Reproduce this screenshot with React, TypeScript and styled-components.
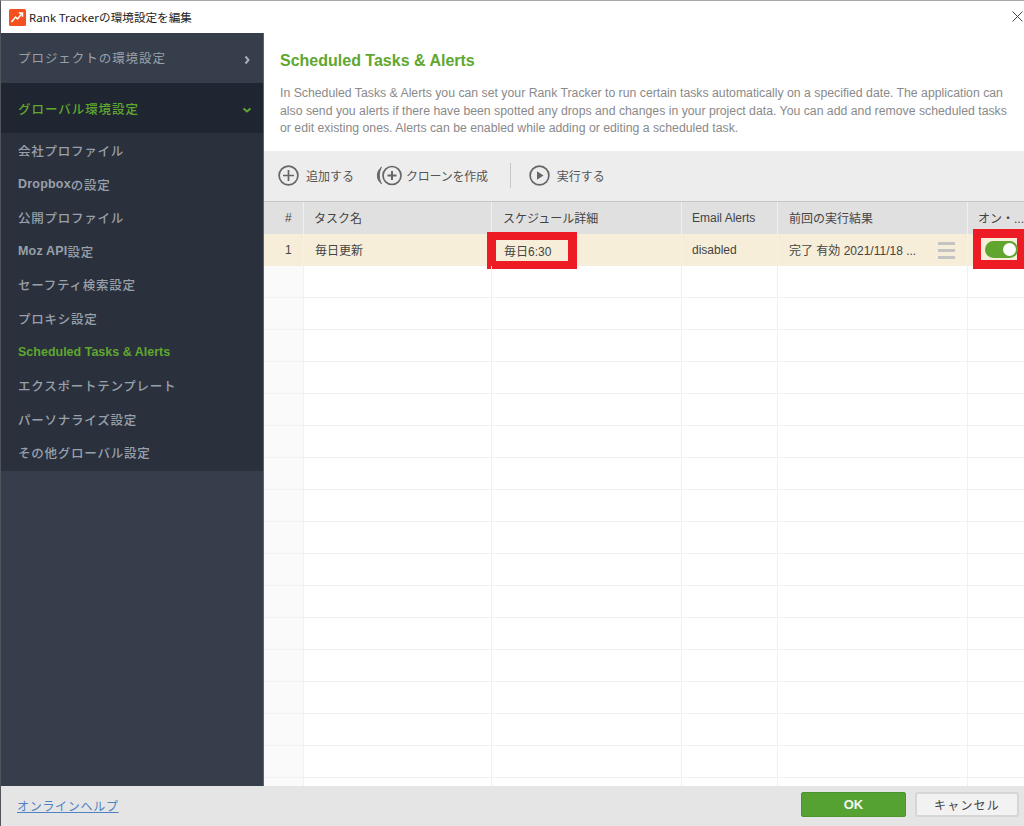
import React from "react";
import styled, { createGlobalStyle } from "styled-components";

const Global = createGlobalStyle`
  html, body { margin: 0; padding: 0; background: #fff; }
  body { font-family: "Liberation Sans", "Noto Sans CJK JP", sans-serif; }
`;

const Win = styled.div`
  width: 1024px; height: 826px; display: flex; flex-direction: column; overflow: hidden;
  box-sizing: border-box; border-top: 1px solid #a8a8a8; border-left: 1px solid #50555c; background: #fff;
  font-family: "Liberation Sans", "Noto Sans CJK JP", sans-serif;
`;
const TitleBar = styled.div`
  height: 32px; flex: none; display: flex; align-items: center; padding-left: 8px; gap: 3px; background: #fff; position: relative;
  font-size: 11.6px; color: #222; font-family: "Noto Sans", "Noto Sans CJK JP", sans-serif;
`;
const CloseBtn = styled.svg`
  position: absolute; right: 1px; top: 10px;
`;
const Body = styled.div`
  flex: 1; display: flex; min-height: 0;
`;
const Side = styled.aside`
  width: 262px; flex: none; background: #373e4b; border-right: 1px solid #5e636a; display: flex; flex-direction: column;
`;
const Head = styled.div<{ $active?: boolean }>`
  height: 50px; flex: none; display: flex; align-items: center; justify-content: space-between; box-sizing: border-box;
  padding: 0 11px ${p => (p.$active ? 0 : 2)}px 17px;
  font-size: 12.5px; letter-spacing: 0.95px; font-weight: ${p => (p.$active ? 500 : 400)};
  color: ${p => (p.$active ? "#5fa72f" : "#98a0ab")};
  background: ${p => (p.$active ? "#1f2632" : "#373e4b")};
  & > svg { margin-top: ${p => (p.$active ? 3 : 5)}px; }
`;
const SubList = styled.div`
  background: #2a303c; padding: 1px 0 2px; display: flex; flex-direction: column;
`;
const SubItem = styled.div<{ $active?: boolean }>`
  height: 33.55px; display: flex; align-items: center; padding-left: 17px;
  font-size: 12.5px; letter-spacing: ${p => (p.$active ? 0 : 0.75)}px;
  font-weight: ${p => (p.$active ? 700 : 500)};
  color: ${p => (p.$active ? "#5fa72f" : "#98a0ab")};
`;
const Latin = styled.b`
  font-weight: 700; letter-spacing: 0.2px;
`;
const Main = styled.main`
  flex: 1; display: flex; flex-direction: column; min-width: 0; background: #fff;
`;
const Intro = styled.div`
  height: 118px; flex: none; box-sizing: border-box; padding: 18px 12px 0 16px;
`;
const Title = styled.h1`
  margin: 0 0 14px; font-size: 16px; line-height: 20px; font-weight: 700; color: #5fa72f;
`;
const Desc = styled.p`
  margin: 0; font-size: 12.27px; line-height: 17.5px; color: #8a8a8a; white-space: nowrap;
`;
const Toolbar = styled.div`
  height: 51px; flex: none; box-sizing: border-box; background: #ededed; border-bottom: 1px solid #c6c6c6; display: flex; align-items: center;
  padding: 0 0 2px 14px; font-size: 12px; color: #555;
`;
const Tool = styled.div<{ $gap?: number; $tight?: boolean }>`
  display: flex; align-items: center; gap: ${p => (p.$tight ? 4 : 7)}px; margin-right: ${p => p.$gap ?? 0}px;
  letter-spacing: ${p => (p.$tight ? -0.25 : 0)}px;
`;
const Sep = styled.div`
  width: 1px; height: 25px; background: #c8c8c8; margin: 0 18px 0 22px;
`;
const Grid = styled.div`
  flex: 1; min-height: 0; overflow: hidden;
`;
const cols = "39px 188px 190px 96px 190px 57px";
const HeadRow = styled.div`
  display: grid; grid-template-columns: ${cols}; height: 32px; background: #e0e0e0; font-size: 12px; color: #444;
`;
const HeadCell = styled.div<{ $num?: boolean; $pad?: number }>`
  display: flex; align-items: center; white-space: nowrap; overflow: hidden; box-sizing: border-box;
  border-left: 1px solid #f0f0f0; padding: 0 0 1px ${p => (p.$num ? 21 : p.$pad ?? 11)}px;
  &:first-child { border-left: 0; }
`;
const Row = styled.div<{ $selected?: boolean }>`
  display: grid; grid-template-columns: ${cols}; height: 32px; box-sizing: border-box;
  background: ${p => (p.$selected ? "#f6eed8" : "#fff")};
  border-bottom: 1px solid ${p => (p.$selected ? "#f6eed8" : "#f1f1f1")};
  font-size: 12px; color: #444;
`;
const Cell = styled.div<{ $num?: boolean; $tinted?: boolean; $pad?: number }>`
  position: relative; display: flex; align-items: center; white-space: nowrap; box-sizing: border-box;
  border-left: 1px solid #f1f1f1; padding-left: ${p => (p.$num ? 21 : p.$pad ?? 11)}px;
  background: ${p => (p.$tinted ? "#fafafa" : "transparent")};
  &:first-child { border-left: 0; }
`;
const ScheduleMark = styled.div`
  position: absolute; left: -5px; top: -2px; width: 64px; height: 20px; border: solid #ed1c24; border-width: 8px 9px;
  display: flex; align-items: center; padding: 0 0 1px 8px; box-sizing: content-box;
`;
const ToggleMark = styled.div`
  position: absolute; left: 5px; top: -5px; width: 36px; height: 22px; border: solid #ed1c24; border-width: 9px 8px;
  display: flex; align-items: center; box-sizing: content-box;
`;
const Toggle = styled.div`
  width: 33px; height: 17px; margin-left: 4px; border-radius: 9px; background: #5fa52f; position: relative; flex: none;
  &::after { content: ""; position: absolute; right: 2px; top: 2px; width: 13px; height: 13px; border-radius: 50%; background: #fff; }
`;
const Menu = styled.div`
  position: absolute; right: 12px; top: 8px; width: 17px; height: 17px; display: flex; flex-direction: column; justify-content: space-between;
  & > i { display: block; height: 3px; background: #c4c4c4; }
`;
const Footer = styled.div`
  height: 40px; flex: none; background: #e5e5e5; display: flex; align-items: center; justify-content: space-between; padding: 0 5px 0 16px;
`;
const Help = styled.a`
  font-size: 12px; color: #4f82c4; text-decoration: underline; letter-spacing: 0.7px; margin-top: -2px;
`;
const Buttons = styled.div`
  display: flex; gap: 9px; margin-top: -3px;
`;
const Ok = styled.button`
  width: 105px; height: 25px; border: 1px solid #4d9430; border-radius: 2px; background: #55a233; color: #f2f7ee; font-weight: 700; font-size: 13px; padding: 0;
  font-family: inherit;
`;
const Cancel = styled.button`
  width: 104px; height: 25px; border: 2px solid #d6d6d6; border-radius: 3px; background: #f2f2f2; color: #444; font-size: 12px; padding: 0; letter-spacing: 1.2px;
  font-family: inherit;
`;

const Chevron = ({ down, color }: { down?: boolean; color: string }) => (
  <svg width="10" height="10" viewBox="0 0 10 10" fill="none" stroke={color} strokeWidth="2">
    <path d={down ? "M1.5 3.5 L5 6.5 L8.5 3.5" : "M3.5 1.5 L6.5 5 L3.5 8.5"} />
  </svg>
);
const Plus = () => (
  <svg width="21" height="21" viewBox="0 0 21 21" fill="none" stroke="#666" strokeWidth="1.7">
    <circle cx="10.5" cy="10.5" r="9.4" />
    <path d="M10.5 5 V16 M5 10.5 H16" />
  </svg>
);
const Clone = () => (
  <svg width="26" height="21" viewBox="0 0 26 21" fill="none" stroke="#666" strokeWidth="1.7">
    <path d="M5.5 2.2 C0 6.5 0 14.5 5.5 18.8 C2.6 14.5 2.6 6.5 5.5 2.2 Z" fill="#666" strokeWidth="1" />
    <circle cx="16" cy="10.5" r="9" />
    <path d="M16 6 V15 M11.5 10.5 H20.5" strokeWidth="2" />
  </svg>
);
const Play = () => (
  <svg width="21" height="21" viewBox="0 0 21 21" fill="none" stroke="#666" strokeWidth="1.7">
    <circle cx="10.5" cy="10.5" r="9.4" />
    <path d="M8 6.3 L14.5 10.5 L8 14.7 Z" fill="#666" stroke="none" />
  </svg>
);
const Logo = () => (
  <svg width="17" height="17" viewBox="0 0 17 17">
    <rect width="17" height="17" rx="1.5" fill="#f4511e" />
    <path d="M2.5 13 L6.5 8 L8.5 10 L13 4.5 M9.8 4 H13.5 V7.8" fill="none" stroke="#fff" strokeWidth="1.5" />
  </svg>
);

const items: React.ReactNode[] = [
  "会社プロファイル",
  <><Latin>Dropbox</Latin>の設定</>,
  "公開プロファイル",
  <><Latin>Moz API</Latin>設定</>,
  "セーフティ検索設定",
  "プロキシ設定",
  "Scheduled Tasks & Alerts",
  "エクスポートテンプレート",
  "パーソナライズ設定",
  "その他グローバル設定",
];
const empties = Array.from({ length: 17 }, (_, i) => i);

export default function App() {
  return (
    <Win>
      <Global />
      <TitleBar>
        <Logo />
        <span>Rank Trackerの環境設定を編集</span>
        <CloseBtn width="11" height="11" viewBox="0 0 11 11" stroke="#444" strokeWidth="1" fill="none">
          <path d="M0.5 0.5 L10.5 10.5 M10.5 0.5 L0.5 10.5" />
        </CloseBtn>
      </TitleBar>
      <Body>
        <Side>
          <Head>プロジェクトの環境設定<Chevron color="#a9afb8" /></Head>
          <Head $active>グローバル環境設定<Chevron down color="#5fa72f" /></Head>
          <SubList>
            {items.map((t, i) => (
              <SubItem key={i} $active={i === 6}>{t}</SubItem>
            ))}
          </SubList>
        </Side>
        <Main>
          <Intro>
            <Title>Scheduled Tasks &amp; Alerts</Title>
            <Desc>
              In Scheduled Tasks &amp; Alerts you can set your Rank Tracker to run certain tasks automatically on a specified date. The application can<br />
              also send you alerts if there have been spotted any drops and changes in your project data. You can add and remove scheduled tasks<br />
              or edit existing ones. Alerts can be enabled while adding or editing a scheduled task.
            </Desc>
          </Intro>
          <Toolbar>
            <Tool $gap={22}><Plus />追加する</Tool>
            <Tool $tight><Clone />クローンを作成</Tool>
            <Sep />
            <Tool><Play />実行する</Tool>
          </Toolbar>
          <Grid>
            <HeadRow>
              <HeadCell $num>#</HeadCell>
              <HeadCell $pad={10}>タスク名</HeadCell>
              <HeadCell>スケジュール詳細</HeadCell>
              <HeadCell $pad={10}>Email Alerts</HeadCell>
              <HeadCell>前回の実行結果</HeadCell>
              <HeadCell $pad={10}>オン・...</HeadCell>
            </HeadRow>
            <Row $selected>
              <Cell $num>1</Cell>
              <Cell>毎日更新</Cell>
              <Cell><ScheduleMark>毎日6:30</ScheduleMark></Cell>
              <Cell $pad={10}>disabled</Cell>
              <Cell>完了 有効 2021/11/18 ...<Menu><i /><i /><i /></Menu></Cell>
              <Cell><ToggleMark><Toggle /></ToggleMark></Cell>
            </Row>
            {empties.map(i => (
              <Row key={i}>
                <Cell $tinted />
                <Cell /><Cell /><Cell /><Cell /><Cell />
              </Row>
            ))}
          </Grid>
        </Main>
      </Body>
      <Footer>
        <Help>オンラインヘルプ</Help>
        <Buttons>
          <Ok>OK</Ok>
          <Cancel>キャンセル</Cancel>
        </Buttons>
      </Footer>
    </Win>
  );
}
